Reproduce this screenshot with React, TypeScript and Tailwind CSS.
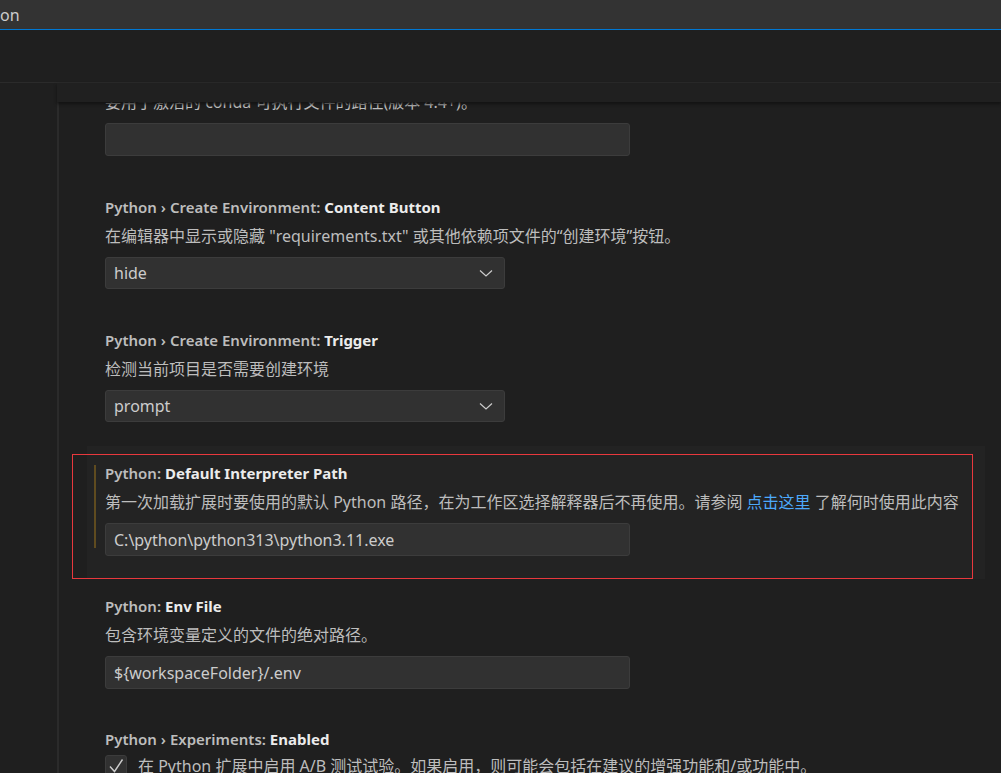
import type { ReactNode } from "react";

// Settings editor, scrolled into the Python section.

function Chevron() {
  return (
    <svg width="16" height="16" viewBox="0 0 16 16" fill="none" className="shrink-0">
      <path d="M2 5.5l6 5.5 6-5.5" stroke="#cccccc" strokeWidth="1.2" />
    </svg>
  );
}

function Check() {
  return (
    <svg width="18" height="18" viewBox="0 0 18 18" fill="none">
      <path d="M3 9.5l4.5 5L15.5 2.5" stroke="#cccccc" strokeWidth="1.4" />
    </svg>
  );
}

function Title({ cat, name }: { cat: string; name: string }) {
  return (
    <div className="leading-[24px] text-[15px] whitespace-nowrap">
      <span className="font-semibold text-[#bdbdbd]">{cat}</span>
      <span className="font-bold text-[#ececec]">{name}</span>
    </div>
  );
}

function Desc({ children }: { children: ReactNode }) {
  return (
    <div className="mt-[5px] leading-[24px] text-[16px] text-[#bdbdbd] whitespace-nowrap">
      {children}
    </div>
  );
}

function TextBox({ value }: { value: string }) {
  return (
    <div className="mt-[9px] h-[33px] w-[525px] rounded-[3px] border border-[#3c3c3c] bg-[#313131] px-[8px] flex items-center text-[16px] text-[#cccccc] whitespace-nowrap">
      {value}
    </div>
  );
}

function SelectBox({ value }: { value: string }) {
  return (
    <div className="mt-[9px] h-[32px] w-[400px] rounded-[3px] border border-[#3c3c3c] bg-[#313131] pl-[8px] pr-[10px] flex items-center justify-between text-[16px] text-[#cccccc]">
      <span>{value}</span>
      <Chevron />
    </div>
  );
}

function Row({
  focused = false,
  children,
}: {
  focused?: boolean;
  children: ReactNode;
}) {
  return (
    <div
      className={`relative flex h-[133px] pt-[15px] pl-[7px] mr-[16px] ${focused ? "bg-[#232323]" : ""}`}
    >
      <div
        className={`w-[2px] shrink-0 mt-[4px] mb-[31px] ${focused ? "bg-[#5f4b1f]" : ""}`}
      />
      <div className="pl-[9px] flex flex-col">{children}</div>
      {focused && (
        <div className="absolute left-[-15px] top-[8px] w-[901px] h-[125px] border border-[#e8383d] pointer-events-none" />
      )}
    </div>
  );
}

export default function App() {
  return (
    <div className="w-[1001px] h-[773px] overflow-hidden bg-[#1f1f1f] flex flex-col font-['Noto_Sans','Noto_Sans_CJK_SC',sans-serif]">
      {/* search box */}
      <div className="h-[29px] shrink-0 bg-[#333333] flex items-center text-[16px] text-[#cccccc] leading-none">
        on
      </div>
      <div className="h-[1px] shrink-0 bg-[#0078d4]" />
      <div className="h-[52px] shrink-0" />
      <div className="h-[1px] shrink-0 bg-[#2b2b2b]" />

      <div className="flex flex-1 min-h-0">
        <div className="w-[57px] shrink-0" />
        <div className="flex-1 flex flex-col min-w-0">
          <div className="h-[19px] shrink-0 bg-[#202020] relative z-10 shadow-[0_2px_3px_#121212]" />
          <div className="flex flex-1 min-h-0">
            <div className="w-[2px] shrink-0 bg-[#2b2b2b]" />
            <div className="flex-1 overflow-hidden pl-[28px]">
              {/* partially scrolled-off conda path row */}
              <div className="pl-[18px] pb-[24px] mr-[16px]">
                <div className="mt-[-12px] leading-[24px] text-[16px] text-[#bdbdbd] whitespace-nowrap">
                  要用于激活的 conda 可执行文件的路径(版本 4.4+)。
                </div>
                <TextBox value="" />
              </div>

              <Row>
                <Title cat="Python › Create Environment: " name="Content Button" />
                <Desc>在编辑器中显示或隐藏 "requirements.txt" 或其他依赖项文件的“创建环境”按钮。</Desc>
                <SelectBox value="hide" />
              </Row>

              <Row>
                <Title cat="Python › Create Environment: " name="Trigger" />
                <Desc>检测当前项目是否需要创建环境</Desc>
                <SelectBox value="prompt" />
              </Row>

              <Row focused>
                <Title cat="Python: " name="Default Interpreter Path" />
                <Desc>
                  第一次加载扩展时要使用的默认 Python 路径，在为工作区选择解释器后不再使用。请参阅{" "}
                  <span className="text-[#4daafc]">点击这里</span> 了解何时使用此内容
                </Desc>
                <TextBox value={"C:\\python\\python313\\python3.11.exe"} />
              </Row>

              <Row>
                <Title cat="Python: " name="Env File" />
                <Desc>包含环境变量定义的文件的绝对路径。</Desc>
                <TextBox value="${workspaceFolder}/.env" />
              </Row>

              <Row>
                <Title cat="Python › Experiments: " name="Enabled" />
                <div className="mt-[3px] flex items-center gap-[11px]">
                  <div className="w-[22px] h-[22px] shrink-0 rounded-[3px] border border-[#3c3c3c] bg-[#313131] flex items-center justify-center">
                    <Check />
                  </div>
                  <span className="text-[16px] leading-[24px] text-[#bdbdbd] whitespace-nowrap">
                    在 Python 扩展中启用 A/B 测试试验。如果启用，则可能会包括在建议的增强功能和/或功能中。
                  </span>
                </div>
              </Row>
            </div>
          </div>
        </div>
      </div>
    </div>
  );
}
